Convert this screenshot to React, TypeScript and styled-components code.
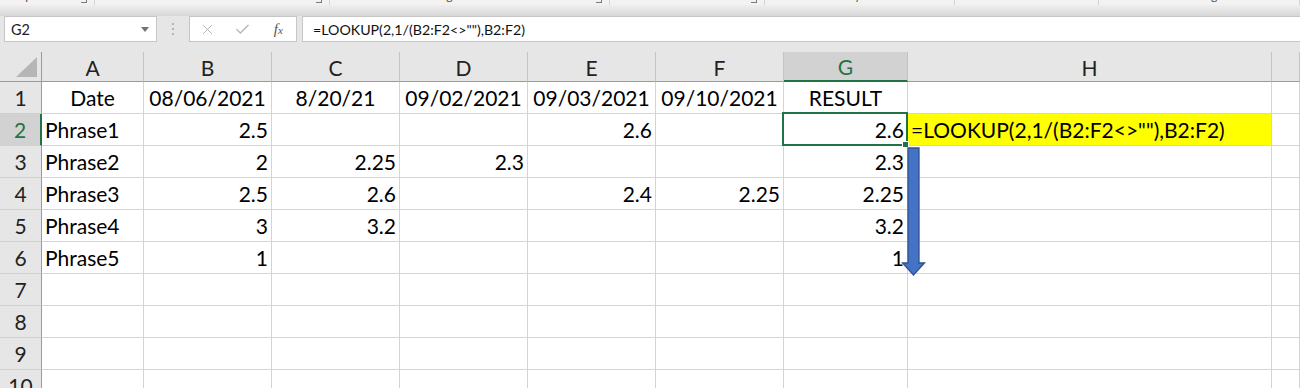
import React from "react";
import styled, { createGlobalStyle } from "styled-components";
import { X, Check } from "lucide-react";

const GlobalStyle = createGlobalStyle`
  html, body {
    margin: 0;
    padding: 0;
    background: #ffffff;
  }
  body {
    overflow: hidden;
    font-family: Lato, "Liberation Sans", sans-serif;
  }
`;

const Page = styled.div`
  width: 1300px;
  height: 388px;
  overflow: hidden;
  background: #ffffff;
`;

/* ribbon group captions, only their bottom edge peeks in */
const RibbonStrip = styled.div`
  display: flex;
  height: 5px;
  overflow: hidden;
  background: #f3f2f1;
`;

const RibbonGroup = styled.div<{ $width: number }>`
  flex: 0 0 ${(p) => p.$width}px;
  display: flex;
  align-items: flex-start;
  box-sizing: border-box;
  border-right: 1px solid #d6d4d2;
`;

const GroupLabel = styled.span`
  flex: 1;
  margin-top: -11px;
  text-align: center;
  font-size: 12px;
  line-height: 14px;
  color: #505050;
`;

const Launcher = styled.span`
  flex: 0 0 20px;
  display: flex;
  justify-content: center;

  &::after {
    content: "";
    width: 5px;
    height: 5px;
    margin-top: -3px;
    border-right: 1px solid #7a7a7a;
    border-bottom: 1px solid #7a7a7a;
  }
`;

const RibbonShadow = styled.div`
  height: 11px;
  background: linear-gradient(#efefef, #d7d7d7);
`;

const FormulaBar = styled.div`
  display: flex;
  height: 26px;
  padding-bottom: 10px;
  background: #e6e6e6;
`;

const NameBox = styled.div`
  margin-left: 4px;
  width: 153px;
  box-sizing: border-box;
  display: flex;
  align-items: center;
  justify-content: space-between;
  padding: 0 7px 0 6px;
  border: 1px solid #c6c6c6;
  background: #ffffff;
  font-size: 14.5px;
  color: #222222;
`;

const Grip = styled.div`
  width: 32px;
  display: flex;
  flex-direction: column;
  align-items: center;
  justify-content: center;
  gap: 3px;

  span {
    width: 2px;
    height: 2px;
    background: #b4b4b4;
  }
`;

const FxBox = styled.div`
  width: 108px;
  box-sizing: border-box;
  display: flex;
  border: 1px solid #c6c6c6;
  background: #ffffff;
`;

const FxButton = styled.div`
  flex: 1;
  display: flex;
  align-items: center;
  justify-content: center;
  color: #b5b5b5;
`;

const FxLabel = styled.span`
  font-family: "Liberation Serif", serif;
  font-style: italic;
  font-size: 15px;
  color: #555555;

  small {
    font-size: 11px;
  }
`;

const FormulaInput = styled.div`
  flex: 1;
  margin-left: 5px;
  display: flex;
  align-items: center;
  padding-left: 10px;
  border: 1px solid #c6c6c6;
  border-right: none;
  background: #ffffff;
  font-size: 14.2px;
  color: #111111;
`;

const Sheet = styled.div`
  position: relative;
  display: grid;
  grid-template-columns: 42px 102px repeat(5, 128px) 124px 364px 1fr;
  grid-template-rows: 30px;
  grid-auto-rows: 32px;
  font-size: 21px;
`;

const Corner = styled.div`
  display: flex;
  align-items: flex-end;
  justify-content: flex-end;
  padding: 0 4px 4px 0;
  background: #e6e6e6;
  border-right: 1px solid #9b9b9b;
  border-bottom: 1px solid #9b9b9b;

  &::after {
    content: "";
    width: 21px;
    height: 20px;
    background: #b6b6b6;
    clip-path: polygon(100% 0, 100% 100%, 0 100%);
  }
`;

const ColHeader = styled.div<{ $selected?: boolean }>`
  display: flex;
  align-items: center;
  justify-content: center;
  padding-top: 1px;
  background: ${(p) => (p.$selected ? "#d2d2d2" : "#e6e6e6")};
  color: ${(p) => (p.$selected ? "#217346" : "#222222")};
  border-right: 1px solid #c4c4c4;
  border-bottom: ${(p) => (p.$selected ? "2px solid #217346" : "1px solid #9b9b9b")};
`;

const RowHeader = styled.div<{ $selected?: boolean }>`
  display: flex;
  align-items: center;
  justify-content: center;
  background: ${(p) => (p.$selected ? "#d2d2d2" : "#e6e6e6")};
  color: ${(p) => (p.$selected ? "#217346" : "#222222")};
  border-right: ${(p) => (p.$selected ? "2px solid #217346" : "1px solid #9b9b9b")};
  border-bottom: 1px solid #d0d0d0;
`;

type Align = "left" | "center" | "right";

const justify: Record<Align, string> = {
  left: "flex-start",
  center: "center",
  right: "flex-end",
};

const Cell = styled.div<{ $align: Align; $fill?: string; $active?: boolean }>`
  position: relative;
  display: flex;
  align-items: center;
  justify-content: ${(p) => justify[p.$align]};
  padding: 0 3px;
  white-space: nowrap;
  background: ${(p) => p.$fill ?? "#ffffff"};
  color: #000000;
  border-right: 1px solid #d4d4d4;
  border-bottom: 1px solid #d4d4d4;
  z-index: ${(p) => (p.$active ? 2 : "auto")};

  ${(p) =>
    p.$active &&
    `
    &::after {
      content: "";
      position: absolute;
      top: -2px;
      left: -2px;
      right: -1px;
      bottom: -1px;
      border: 2px solid #217346;
      pointer-events: none;
    }
  `}
`;

const FillHandle = styled.span`
  position: absolute;
  right: -2px;
  bottom: -3px;
  width: 5px;
  height: 5px;
  background: #217346;
  border: 1px solid #ffffff;
  z-index: 3;
`;

const FillArrow = styled.svg`
  position: absolute;
  left: 900px;
  top: 95px;
  z-index: 4;
`;

const FORMULA = '=LOOKUP(2,1/(B2:F2<>""),B2:F2)';

const ribbonGroups = [
  { label: "Clipboard", width: 95, launcher: true },
  { label: "Font", width: 235, launcher: true },
  { label: "Alignment", width: 280, launcher: true },
  { label: "Number", width: 155, launcher: true },
  { label: "Styles", width: 190, launcher: false },
  { label: "Cells", width: 144, launcher: false },
  { label: "Editing", width: 201, launcher: false },
];

const columns = ["A", "B", "C", "D", "E", "F", "G", "H", ""];

const rows: string[][] = [
  ["Date", "08/06/2021", "8/20/21", "09/02/2021", "09/03/2021", "09/10/2021", "RESULT", "", ""],
  ["Phrase1", "2.5", "", "", "2.6", "", "2.6", FORMULA, ""],
  ["Phrase2", "2", "2.25", "2.3", "", "", "2.3", "", ""],
  ["Phrase3", "2.5", "2.6", "", "2.4", "2.25", "2.25", "", ""],
  ["Phrase4", "3", "3.2", "", "", "", "3.2", "", ""],
  ["Phrase5", "1", "", "", "", "", "1", "", ""],
  ["", "", "", "", "", "", "", "", ""],
  ["", "", "", "", "", "", "", "", ""],
  ["", "", "", "", "", "", "", "", ""],
  ["", "", "", "", "", "", "", "", ""],
];

const alignFor = (row: number, col: number): Align => {
  if (row === 1) return "center";
  if (col === 0 || col >= 7) return "left";
  return "right";
};

const App = () => {
  return (
    <Page>
      <GlobalStyle />
      <RibbonStrip>
        {ribbonGroups.map((g) => (
          <RibbonGroup key={g.label} $width={g.width}>
            <GroupLabel>{g.label}</GroupLabel>
            {g.launcher && <Launcher />}
          </RibbonGroup>
        ))}
      </RibbonStrip>
      <RibbonShadow />

      <FormulaBar>
        <NameBox>
          <span>G2</span>
          <svg width="8" height="5" viewBox="0 0 8 5">
            <path d="M0 0 H8 L4 5 Z" fill="#737373" />
          </svg>
        </NameBox>
        <Grip>
          <span />
          <span />
          <span />
        </Grip>
        <FxBox>
          <FxButton>
            <X size={17} strokeWidth={1.4} />
          </FxButton>
          <FxButton>
            <Check size={17} strokeWidth={1.8} />
          </FxButton>
          <FxButton>
            <FxLabel>
              f<small>x</small>
            </FxLabel>
          </FxButton>
        </FxBox>
        <FormulaInput>{FORMULA}</FormulaInput>
      </FormulaBar>

      <Sheet>
        <Corner />
        {columns.map((c, i) => (
          <ColHeader key={`h${i}`} $selected={c === "G"}>
            {c}
          </ColHeader>
        ))}
        {rows.map((cells, r) => {
          const rowNo = r + 1;
          return (
            <React.Fragment key={rowNo}>
              <RowHeader $selected={rowNo === 2}>{rowNo}</RowHeader>
              {cells.map((v, c) => {
                const active = rowNo === 2 && c === 6;
                return (
                  <Cell
                    key={c}
                    $align={alignFor(rowNo, c)}
                    $fill={rowNo === 2 && c === 7 ? "#ffff00" : undefined}
                    $active={active}
                  >
                    {v}
                    {active && <FillHandle />}
                  </Cell>
                );
              })}
            </React.Fragment>
          );
        })}
        <FillArrow width="28" height="132" viewBox="0 0 28 132">
          <path
            d="M8 1 H19 V116 H24.5 L13.5 128 L2.5 116 H8 Z"
            fill="#4472c4"
            stroke="#2f528f"
            strokeWidth="1.3"
            strokeLinejoin="miter"
          />
        </FillArrow>
      </Sheet>
    </Page>
  );
};

export default App;
